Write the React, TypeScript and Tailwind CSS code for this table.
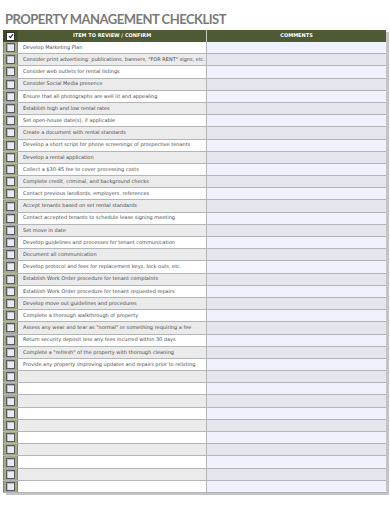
import React from "react";

const items = [
  "Develop Marketing Plan",
  "Consider print advertising: publications, banners, \"FOR RENT\" signs, etc.",
  "Consider web outlets for rental listings",
  "Consider Social Media presence",
  "Ensure that all photographs are well lit and appealing",
  "Establish high and low rental rates",
  "Set open-house date(s), if applicable",
  "Create a document with rental standards",
  "Develop a short script for phone screenings of prospective tenants",
  "Develop a rental application",
  "Collect a $30-45 fee to cover processing costs",
  "Complete credit, criminal, and background checks",
  "Contact previous landlords, employers, references",
  "Accept tenants based on set rental standards",
  "Contact accepted tenants to schedule lease signing meeting",
  "Set move in date",
  "Develop guidelines and processes for tenant communication",
  "Document all communication",
  "Develop protocol and fees for replacement keys, lock outs, etc.",
  "Establish Work Order procedure for tenant complaints",
  "Establish Work Order procedure for tenant requested repairs",
  "Develop move out guidelines and procedures",
  "Complete a thorough walkthrough of property",
  "Assess any wear and tear as \"normal\" or something requiring a fee",
  "Return security deposit less any fees incurred within 30 days",
  "Complete a \"refresh\" of the property with thorough cleaning",
  "Provide any property improving updates and repairs prior to relisting",
];

const rows = [...items, ...Array(10).fill("")];

function Box() {
  return (
    <div className="w-[9px] h-[9px] border border-[#5a5a5a] bg-[#e9eaf5] shadow-[inset_1px_1px_0_#b9bccb]" />
  );
}

function Row({ text, i }: { text: string; i: number }) {
  const odd = i % 2 === 0;
  return (
    <div className="grid grid-cols-[15px_189px_1fr] border-b border-[#b2b4b8]">
      <div className="flex items-center justify-center bg-[#a3aa8b] border-x border-[#7d8466]">
        <Box />
      </div>
      <div
        className={`flex items-center pl-[5px] text-[5px] text-[#4a4a4a] whitespace-nowrap border-r border-[#b2b4b8] ${
          odd ? "bg-white" : "bg-[#ebebec]"
        }`}
      >
        {text}
      </div>
      <div className={odd ? "bg-[#eff2fc]" : "bg-[#e4e6ed]"} />
    </div>
  );
}

export default function App() {
  return (
    <div className="w-[390px] h-[505px] bg-white font-['DejaVu_Sans',sans-serif]">
      <div className="pt-[11px] pl-[5px] text-[13px] leading-[16px] font-['Lato',sans-serif] font-bold text-[#7a7a7a] tracking-[-0.5px]">
        PROPERTY MANAGEMENT CHECKLIST
      </div>
      <div className="ml-[3px] mt-[3px] w-[383px] shadow-[3px_2px_0_#c4c4c6]">
        <div className="grid grid-cols-[15px_189px_1fr] h-[12px] bg-[#4e5a33] text-white text-[5px] font-bold">
          <div className="flex items-center justify-center bg-[#3f4a28]">
            <div className="w-[9px] h-[9px] bg-white border border-[#333] flex items-center justify-center">
              <svg width="6" height="6" viewBox="0 0 6 6">
                <path d="M1 3.2 L2.5 4.6 L5 1.2" stroke="#222" strokeWidth="1.1" fill="none" />
              </svg>
            </div>
          </div>
          <div className="flex items-center justify-center border-r border-[#c9cdb8]">
            ITEM TO REVIEW / CONFIRM
          </div>
          <div className="flex items-center justify-center">COMMENTS</div>
        </div>
        <div className="h-[451px] grid grid-rows-[repeat(37,minmax(0,1fr))]">
          {rows.map((t, i) => (
            <Row key={i} text={t} i={i} />
          ))}
        </div>
      </div>
    </div>
  );
}
